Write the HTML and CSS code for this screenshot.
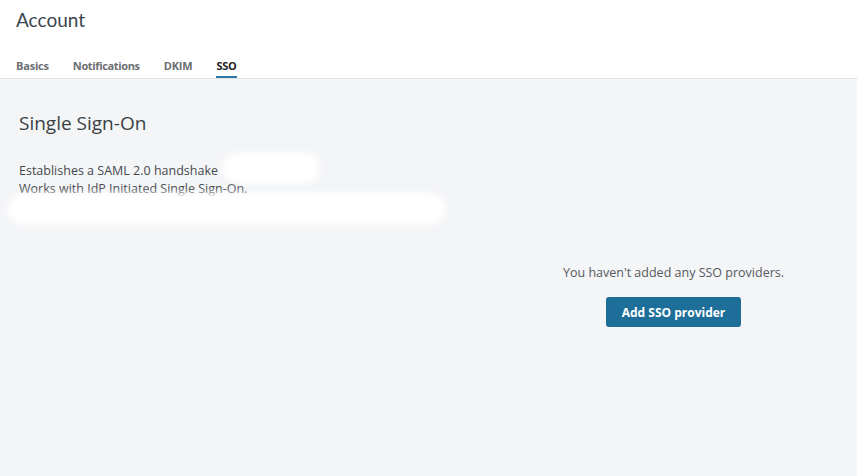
FILE: index.html
```html
<!DOCTYPE html>
<html lang="en">
<head>
    <meta charset="UTF-8">
    <meta name="viewport" content="width=device-width, initial-scale=1.0">
    <title>Account - SSO</title>
    <link rel="stylesheet" href="styles.css">
</head>
<body>
    <header class="page-header">
        <h1 class="page-title">Account</h1>
        <nav class="tabs">
            <a class="tab" href="#">Basics</a>
            <a class="tab" href="#">Notifications</a>
            <a class="tab" href="#">DKIM</a>
            <a class="tab active" href="#">SSO</a>
        </nav>
    </header>

    <main class="sso-page">
        <section class="sso-info">
            <h2 class="section-title">Single Sign-On</h2>
            <p class="section-text">
                Establishes a SAML 2.0 handshake<br>
                Works with IdP Initiated Single Sign-On.
            </p>

            <!-- redacted areas -->
            <div class="redact redact-short"></div>
            <div class="redact redact-long"></div>
        </section>

        <section class="sso-empty">
            <p class="empty-text">You haven't added any SSO providers.</p>
            <button class="add-btn">Add SSO provider</button>
        </section>
    </main>
</body>
</html>
```

FILE: styles.css
```css
* {
    margin: 0;
    padding: 0;
    box-sizing: border-box;
}

body {
    font-family: 'Open Sans', 'Liberation Sans', sans-serif;
    background-color: #f4f5f7;
    min-height: 100vh;
    color: #3a3f44;
}

/* Header */
.page-header {
    background-color: white;
    border-bottom: 1px solid #dfe1e4;
    padding: 9px 16px 0;
}

.page-title {
    font-family: Lato, 'Open Sans', sans-serif;
    font-size: 19px;
    font-weight: 400;
    color: #3a4650;
    line-height: 22px;
    margin-bottom: 28px;
}

.tabs {
    display: flex;
    gap: 24px;
}

.tab {
    font-size: 11px;
    font-weight: 700;
    color: #6b6e72;
    text-decoration: none;
    padding-bottom: 4px;
    border-bottom: 2px solid transparent;
    line-height: 13px;
    letter-spacing: -0.2px;
}

.tab:nth-child(2) {
    letter-spacing: -0.35px;
}

.tab.active {
    color: #1e2124;
    border-bottom-color: #2f7ba6;
}

/* Content */
.sso-page {
    display: grid;
    grid-template-columns: 490px 1fr;
}

.sso-info {
    position: relative;
    padding: 33px 19px 0;
}

.section-title {
    font-size: 19px;
    font-weight: 400;
    color: #3a3f44;
    line-height: 22px;
    margin-bottom: 28px;
}

.section-text {
    font-size: 12.5px;
    line-height: 18px;
    color: #45494d;
}

.redact {
    position: absolute;
    background-color: white;
    border-radius: 16px;
    filter: blur(3px);
}

.redact-short {
    left: 222px;
    top: 74px;
    width: 98px;
    height: 30px;
}

.redact-long {
    left: 8px;
    top: 114px;
    width: 437px;
    height: 32px;
}

.sso-empty {
    display: flex;
    flex-direction: column;
    align-items: center;
    padding-top: 185px;
}

.empty-text {
    font-size: 12.5px;
    color: #55595d;
    line-height: 17px;
    margin-bottom: 16px;
}

.add-btn {
    font-family: inherit;
    font-size: 12px;
    font-weight: 700;
    color: white;
    background-color: #1d6f99;
    border: none;
    border-radius: 3px;
    width: 135px;
    height: 30px;
    cursor: pointer;
}
```
